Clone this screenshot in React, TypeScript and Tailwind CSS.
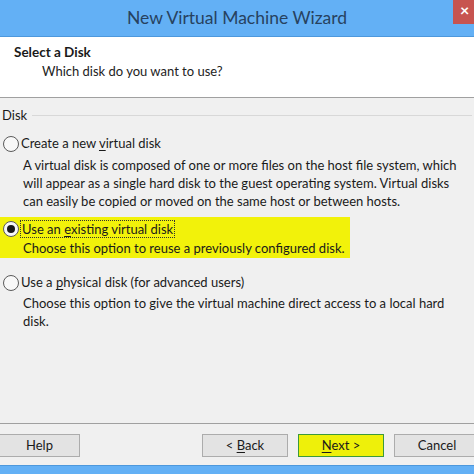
const font = { fontFamily: 'Lato, "Noto Sans", sans-serif' }

function Radio({ checked }: { checked?: boolean }) {
  return (
    <span className="w-[16px] h-[16px] rounded-full border border-[#5a5a5a] bg-[#f8f8f8] flex items-center justify-center shrink-0">
      {checked && <span className="w-[8px] h-[8px] rounded-full bg-[#1a1a1a]" />}
    </span>
  )
}

export default function App() {
  return (
    <div className="w-[474px] h-[474px] overflow-hidden bg-[#f0f0f0] flex flex-col text-[#1a1a1a]" style={font}>
      {/* title bar */}
      <div className="relative h-[37px] bg-[#63b0f5] border-b border-[#4d98dc] flex items-center justify-center shrink-0">
        <span className="text-[17.5px] text-[#27425f]">New Virtual Machine Wizard</span>
        <div className="absolute top-0 right-0 w-[21px] h-[24px] bg-[#c75450] overflow-hidden">
          <span className="absolute left-[7px] top-[2px] text-white text-[16px] font-bold leading-none">×</span>
        </div>
      </div>

      {/* header */}
      <div className="h-[61px] bg-white border-b border-[#a0a0a0] shrink-0 pl-[14px] pt-[5px]">
        <div className="text-[13.5px] font-bold leading-[20px]">Select a Disk</div>
        <div className="text-[13px] leading-[18px] pl-[28px] text-[#222]">Which disk do you want to use?</div>
      </div>

      {/* body */}
      <div className="flex-1 flex flex-col pt-[8px] text-[13px]">
        <div className="flex items-center pl-[2px] pr-[2px] h-[18px]">
          <span className="leading-[18px]">Disk</span>
          <span className="flex-1 h-px bg-[#d8d8d8] ml-[5px]" />
        </div>

        <div className="mt-[11px] flex items-center gap-[2px] pl-[3px] h-[18px]">
          <Radio />
          <span>Create a new <u className="underline-offset-2">v</u>irtual disk</span>
        </div>
        <div className="pl-[23px] pr-[10px] pt-[3px] leading-[18px]">
          A virtual disk is composed of one or more files on the host file system, which will appear as a single hard disk to the guest operating system. Virtual disks can easily be copied or moved on the same host or between hosts.
        </div>

        <div className="mt-[7px] w-[350px] h-[41px] bg-[#f2f20a] pt-[3px]">
          <div className="flex items-center gap-[1px] pl-[3px] h-[18px]">
            <Radio checked />
            <span className="border border-dotted border-[#333] px-[1px] leading-[16px]">
              Use an <u className="underline-offset-2">e</u>xisting virtual disk
            </span>
          </div>
          <div className="pl-[23px] leading-[18px] mt-[1px] whitespace-nowrap">Choose this option to reuse a previously configured disk.</div>
        </div>

        <div className="mt-[16px] flex items-center gap-[2px] pl-[3px] h-[18px]">
          <Radio />
          <span>Use a <u className="underline-offset-2">p</u>hysical disk (for advanced users)</span>
        </div>
        <div className="pl-[23px] pr-[8px] pt-[2px] leading-[18px]">
          Choose this option to give the virtual machine direct access to a local hard disk.
        </div>
      </div>

      {/* footer */}
      <div className="border-t border-[#a0a0a0] h-[42px] shrink-0 flex items-start pt-[10px] text-[13px]">
        <button className="w-[80px] h-[23px] bg-[#e3e3e3] border border-[#acacac] border-l-0">Help</button>
        <div className="flex-1" />
        <button className="w-[86px] h-[23px] bg-[#e3e3e3] border border-[#acacac]">&lt; <u className="underline-offset-2">B</u>ack</button>
        <button className="ml-[10px] w-[86px] h-[23px] bg-[#eef00a] border border-[#3c9a3c]"><u className="underline-offset-2">N</u>ext &gt;</button>
        <button className="ml-[10px] w-[86px] h-[23px] bg-[#e3e3e3] border border-[#acacac] -mr-[6px]">Cancel</button>
      </div>
      <div className="h-[9px] bg-[#63b0f5] border-t border-[#4d98dc] shrink-0" />
    </div>
  )
}
